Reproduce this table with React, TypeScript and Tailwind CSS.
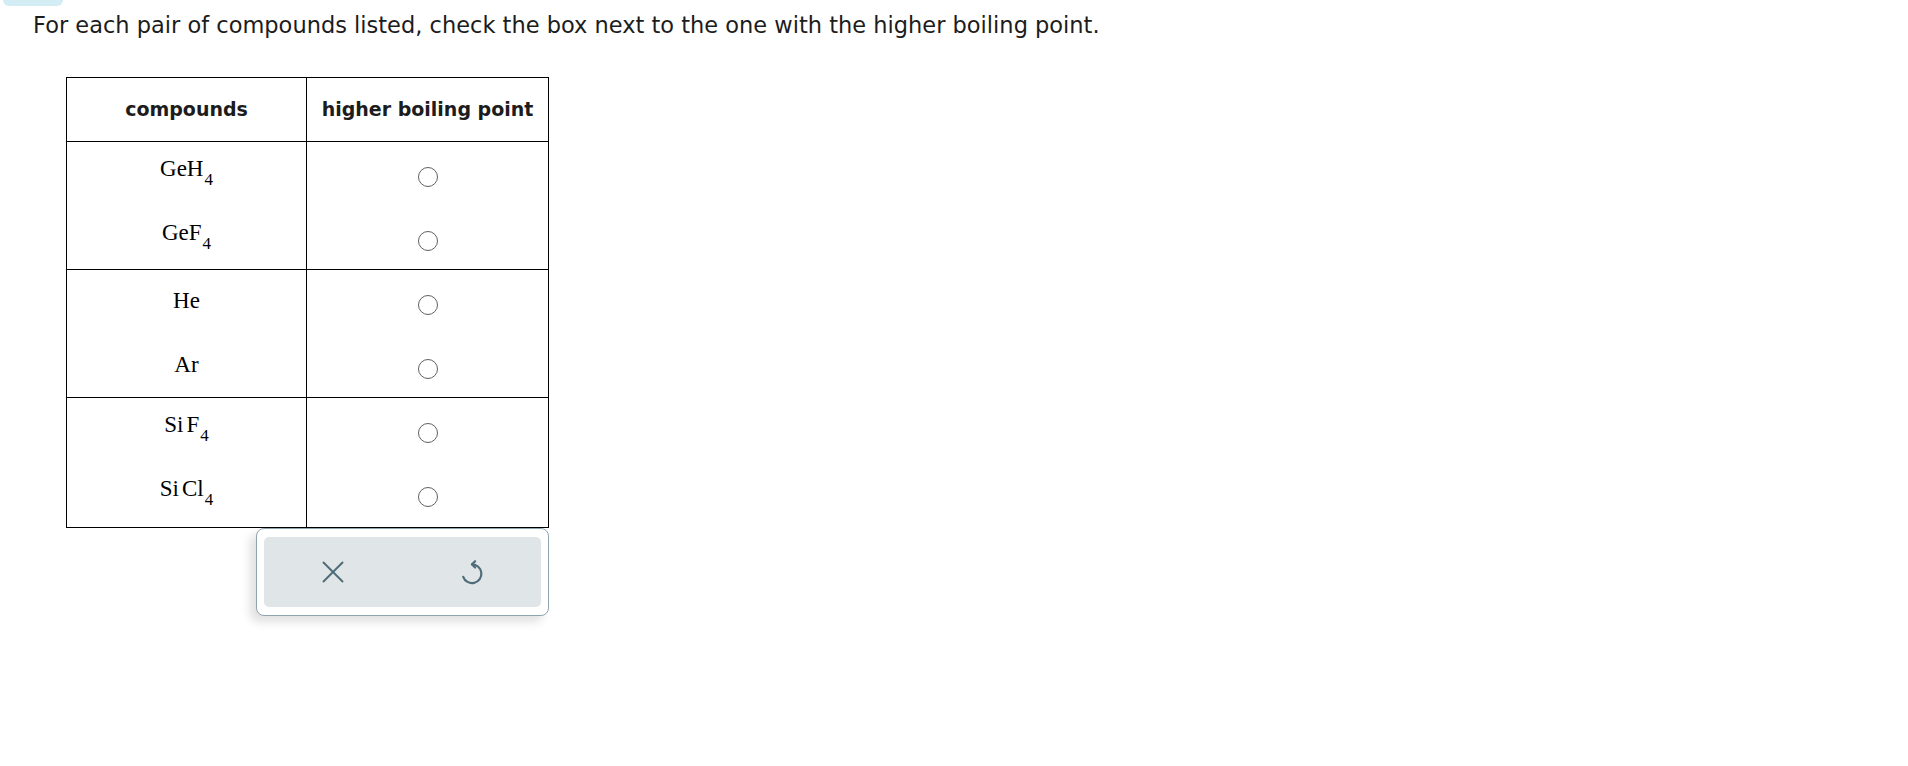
import { X } from 'lucide-react'

type Compound = { parts: string[]; sub?: string; spaced?: boolean }

const pairs: Compound[][] = [
  [
    { parts: ['Ge', 'H'], sub: '4' },
    { parts: ['Ge', 'F'], sub: '4' },
  ],
  [{ parts: ['He'] }, { parts: ['Ar'] }],
  [
    { parts: ['Si', 'F'], sub: '4', spaced: true },
    { parts: ['Si', 'Cl'], sub: '4', spaced: true },
  ],
]

function Formula({ c }: { c: Compound }) {
  return (
    <span className="font-['Liberation_Serif',serif] text-[23px] leading-none text-black">
      {c.parts.map((p, i) => (
        <span key={i} className={i > 0 && c.spaced ? 'ml-[3px]' : ''}>
          {p}
        </span>
      ))}
      {c.sub && <span className="ml-[1px] align-[-9px] text-[17px]">{c.sub}</span>}
    </span>
  )
}

function UndoIcon() {
  return (
    <svg width="34" height="34" viewBox="0 0 24 24" fill="none" stroke="currentColor" strokeWidth="1.55" strokeLinecap="round" strokeLinejoin="round">
      {/* arc opens at the upper left, arrow head sits on top */}
      <path d="M12 6.6a6.6 6.6 0 1 1-6.2 8.8" />
      <path d="M14.2 4.4L12 6.6l2.2 2.2" />
    </svg>
  )
}

export default function App() {
  return (
    <div className="relative min-h-[766px] w-full bg-white font-['DejaVu_Sans',sans-serif] text-[#1c1c1c]">
      {/* tab stub at the very top */}
      <div className="ml-[3px] h-[6px] w-[60px] rounded-b-[6px] bg-[#d4ecf3]" />

      <p className="pt-[6px] pl-[33px] text-[22.5px] leading-[26px]">
        For each pair of compounds listed, check the box next to the one with the higher boiling point.
      </p>

      <div className="mt-[39px] ml-[66px] w-[483px]">
        {/* answer table */}
        <div className="border-t border-l border-black">
          <div className="grid grid-cols-[240px_242px]">
            <div className="flex h-[64px] items-center justify-center border-r border-b border-black text-[19px] font-bold">
              compounds
            </div>
            <div className="flex h-[64px] items-center justify-center border-r border-b border-black text-[19px] font-bold">
              higher boiling point
            </div>
          </div>

          {pairs.map((pair, gi) => (
            <div key={gi} className="grid grid-cols-[240px_242px]">
              <div className={`${gi === 2 ? 'h-[130px]' : 'h-[128px]'} border-r border-b border-black pt-[3px]`}>
                {pair.map((c, i) => (
                  <div key={i} className="flex h-[64px] items-center justify-center pb-[10px]">
                    <Formula c={c} />
                  </div>
                ))}
              </div>
              <div className={`${gi === 2 ? 'h-[130px]' : 'h-[128px]'} border-r border-b border-black pt-[3px]`}>
                {pair.map((_, i) => (
                  <div key={i} className="flex h-[64px] items-center justify-center">
                    <div className="h-[20px] w-[20px] rounded-full border-[1.5px] border-[#606060] bg-white" />
                  </div>
                ))}
              </div>
            </div>
          ))}
        </div>

        {/* check / reset toolbar */}
        <div className="flex justify-end">
          <div className="w-[293px] rounded-[8px] border border-[#8fa4ad] bg-white px-[7px] py-[8px] shadow-[-6px_6px_10px_rgba(0,0,0,0.12)]">
            <div className="grid h-[70px] grid-cols-2 rounded-[5px] bg-[#e0e5e8] text-[#4f6c79]">
              <button className="flex items-center justify-center">
                <X size={38} strokeWidth={1.2} />
              </button>
              <button className="flex items-center justify-center">
                <UndoIcon />
              </button>
            </div>
          </div>
        </div>
      </div>
    </div>
  )
}
